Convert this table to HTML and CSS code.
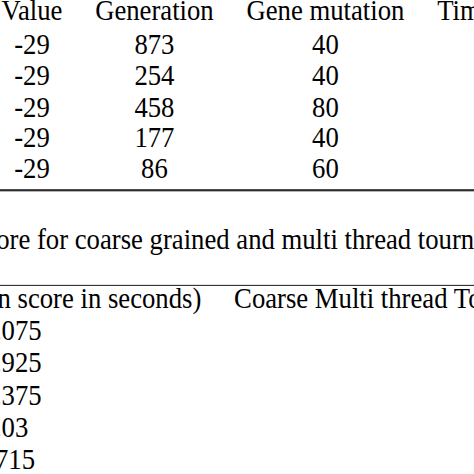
FILE: index.html
```html
<!DOCTYPE html>
<html lang="en">
<head>
<meta charset="utf-8">
<title>Tables</title>
<link rel="stylesheet" href="styles.css">
</head>
<body>
<div class="page">
  <table class="t1">
    <thead>
      <tr><th>Value</th><th>Generation</th><th>Gene mutation</th><th>Time (in seconds)</th></tr>
    </thead>
    <tbody>
      <tr><td>-29</td><td>873</td><td>40</td><td>12.4</td></tr>
      <tr><td>-29</td><td>254</td><td>40</td><td>3.9</td></tr>
      <tr><td>-29</td><td>458</td><td>80</td><td>7.1</td></tr>
      <tr><td>-29</td><td>177</td><td>40</td><td>2.8</td></tr>
      <tr><td>-29</td><td>86</td><td>60</td><td>1.5</td></tr>
    </tbody>
  </table>
  <div class="rule rule-bottom"></div>
  <div class="caption">score for coarse grained and multi thread tournament selection</div>
  <div class="rule rule-top"></div>
  <table class="t2">
    <thead>
      <tr><th class="c1">Time (Tournament selection score in seconds)</th><th>Coarse Multi thread Tournament selection (score in seconds)</th></tr>
    </thead>
    <tbody>
      <tr><td class="c1">1.075</td><td>0.612</td></tr>
      <tr><td class="c1">0.925</td><td>0.540</td></tr>
      <tr><td class="c1">1.375</td><td>0.801</td></tr>
      <tr><td class="c1">1.03</td><td>0.598</td></tr>
      <tr><td class="c1">0715</td><td>0.421</td></tr>
    </tbody>
  </table>
</div>
</body>
</html>
```

FILE: styles.css
```css
html, body {
  margin: 0;
  padding: 0;
  background: #ffffff;
}

body {
  width: 474px;
  height: 474px;
  overflow: hidden;
  font-family: "Liberation Serif", "Times New Roman", serif;
  font-size: 26.7px;
  color: #000000;
}

.page {
  margin-top: -5.5px;
  transform: scaleY(1.1);
  transform-origin: 0 5.5px;
  white-space: nowrap;
}

table {
  border-collapse: collapse;
  border-spacing: 0;
}

th, td {
  padding: 0 16.4px;
  font-weight: normal;
  text-align: center;
  white-space: nowrap;
}

.t1 {
  margin-left: -14.8px;
}

.t1 th, .t1 td {
  line-height: 28.4px;
}

.t1 thead th {
  padding-bottom: 2.4px;
}

.rule {
  width: 474px;
  height: 1.8px;
  background: #2e2e2e;
}

.rule-bottom {
  margin-top: 4.1px;
}

.caption {
  margin-top: 29.1px;
  margin-left: -26px;
  line-height: 28.4px;
}

.rule-top {
  margin-top: 27.4px;
}

.t2 {
  margin-left: -306.6px;
}

.t2 thead th {
  line-height: 22.2px;
  padding-bottom: 3.3px;
}

.t2 td {
  line-height: 29.3px;
}

.t2 th.c1 {
  text-align: left;
}

.t2 td.c1 {
  text-align: left;
  padding-left: 288.2px;
}
```
